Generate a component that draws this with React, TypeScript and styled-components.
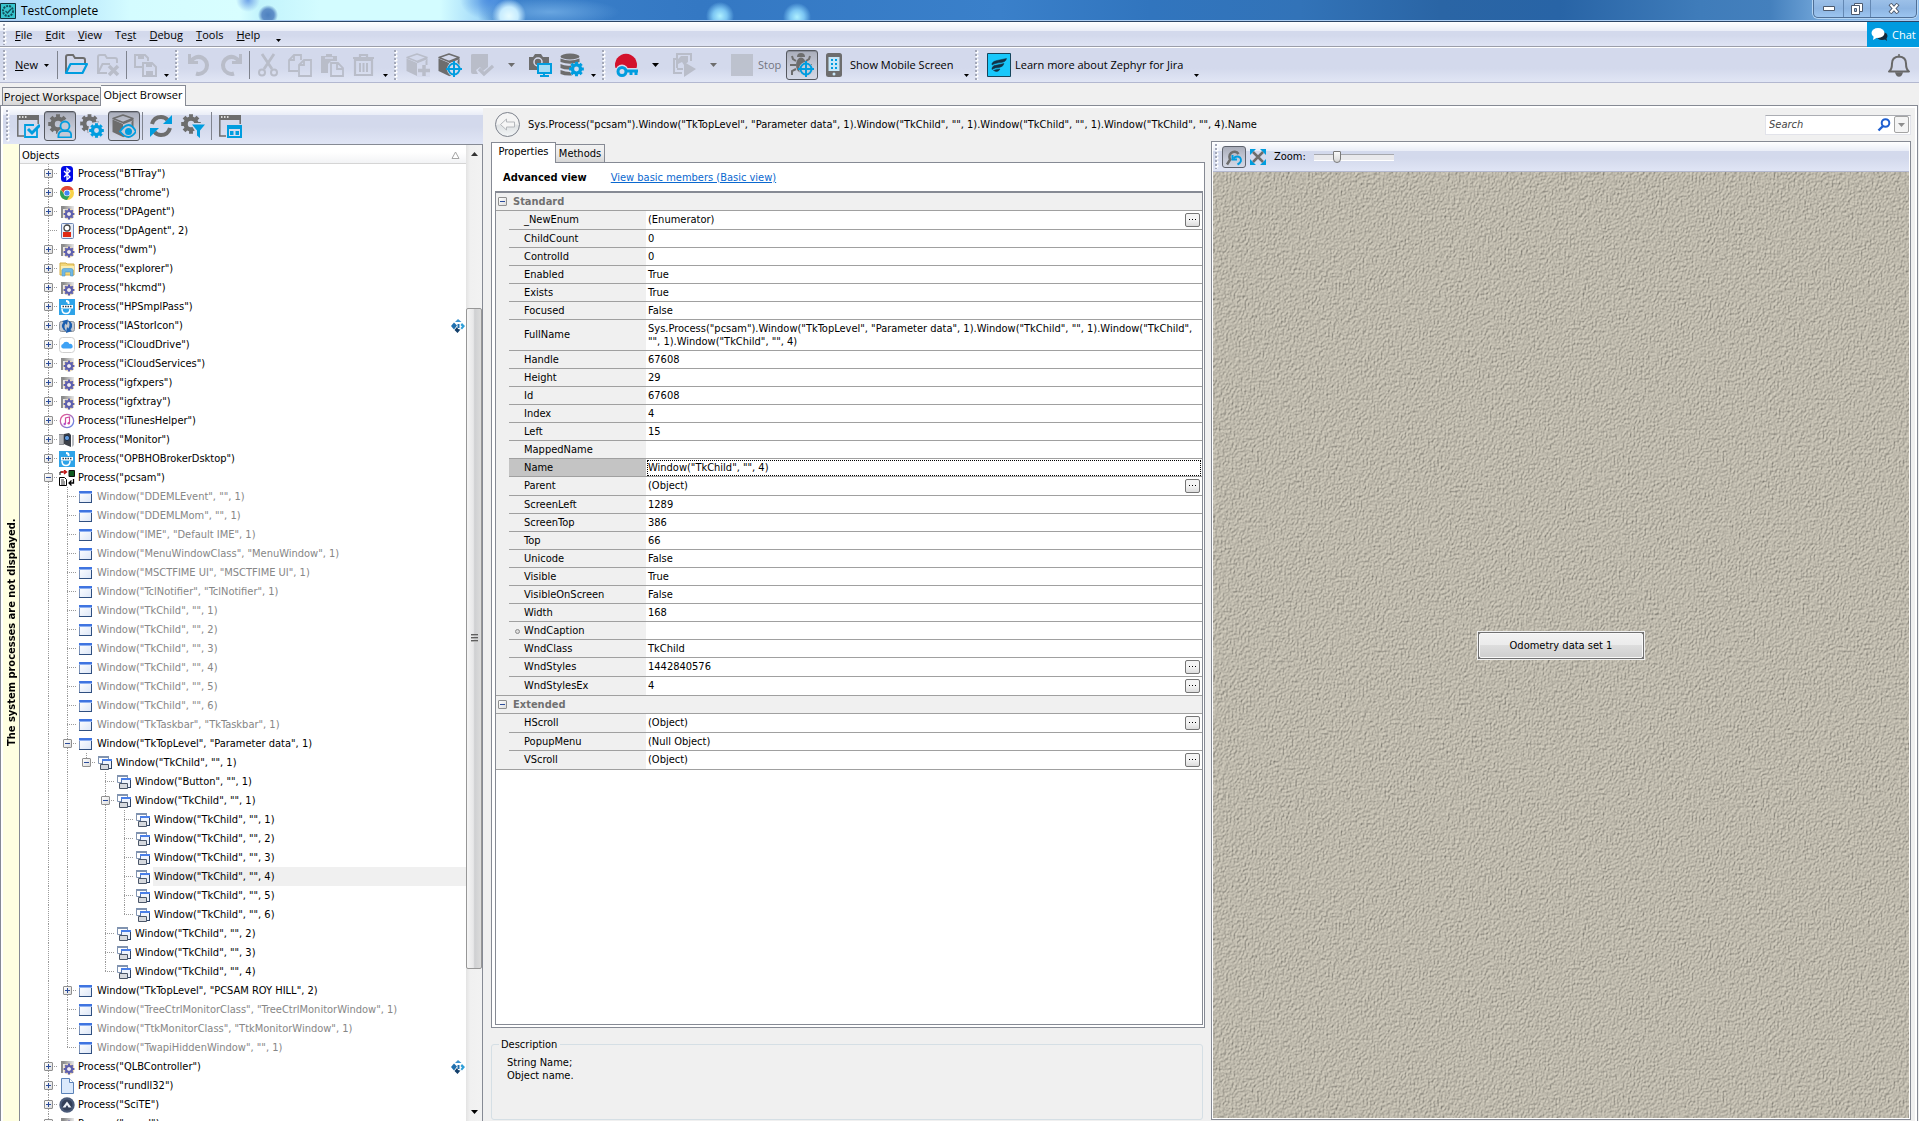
import React from 'react';
import styled, { createGlobalStyle, css } from 'styled-components';

const TAHOMA = `Tahoma, "DejaVu Sans Condensed", "Noto Sans", sans-serif`;
const SEGOE = `"Open Sans", "Noto Sans", sans-serif`;
const GRAY = '#6d6d6d';
const BLUE = '#009ddf';
const OFF = '#b9bdc9';
const LINE = '#868a94';

const GlobalStyle = createGlobalStyle`
  *, *::before, *::after { box-sizing: border-box; }
  html, body, #root { height: 100%; }
  body { margin: 0; overflow: hidden; background: #f0f0f0; color: #000; font: 11px/13px ${TAHOMA}; }
  button, input { font: inherit; color: inherit; }
  button { margin: 0; padding: 0; border: 0; background: none; }
  svg { display: block; flex: none; }
`;

const barGradient = css`background: linear-gradient(#fff 0, #e9edf7 9px, #d3d9ec 9px, #d3d9ec 55%, #e0e5f5 100%);`;

const Shell = styled.div`
  display: flex;
  flex-direction: column;
  height: 100vh;
`;

/* ---------- title bar ---------- */
const TitleBar = styled.header`
  flex: none;
  display: flex;
  align-items: center;
  height: 22px;
  border-bottom: 1px solid #2c4566;
  box-shadow: inset 0 -1px #a9cbf0;
  background:
    radial-gradient(circle at 509px 16px, #e6fbff 0, #c7ecff 9px, transparent 17px),
    radial-gradient(circle at 720px 16px, #aef0ff 0, #7cc6f3 7px, transparent 14px),
    radial-gradient(circle at 797px 17px, #aef0ff 0, #7cc6f3 7px, transparent 14px),
    radial-gradient(ellipse 70px 14px at 550px 12px, #68a5e0 0, transparent 100%),
    radial-gradient(circle at 268px 15px, #4d80bf 0, #5f8fc8 6px, transparent 10px),
    radial-gradient(circle at 248px 0, #6fa3e8 0, transparent 12px),
    radial-gradient(ellipse 30px 20px at 490px 0, #4d8fe0 0, transparent 100%),
    linear-gradient(90deg, #a9d7f7 0, #b5e4fb 60px, #d4fcff 130px, #d8feff 240px, #c2f3fc 260px, #d3fcff 320px, #d3fcff 440px, #a6dcfa 478px, #3b80ca 500px, #3478c3 700px, #3a80ca 1000px, #3175be 1150px, #3273b8 1300px, #2a65a5 1440px, #2864a6 1560px, #3f7cba 1700px, #4480bd 1770px, #82b3e3 1840px, #8fbfee 100%);
`;
const Title = styled.h1`
  flex: 1;
  margin: 0 0 0 5px;
  font: 12px/20px ${SEGOE};
`;
const Caption = styled.div`
  display: flex;
  align-self: flex-start;
  height: 18px;
  margin-right: 2px;
  border: 1px solid #4f6f96;
  border-top: 0;
  border-radius: 0 0 5px 5px;
  background: linear-gradient(#9cc0e8, #8db5e2 50%, #9cc5f0);
  box-shadow: 0 0 0 1px #b5d6f5;
`;
const CaptionButton = styled.button<{ $w: number }>`
  display: grid;
  place-items: center;
  width: ${p => p.$w}px;
  & + & { border-left: 1px solid #6488b3; }
`;

/* ---------- bars ---------- */
const MenuBar = styled.nav`
  flex: none;
  display: flex;
  align-items: stretch;
  height: 26px;
  border-bottom: 1px solid #fff;
  box-shadow: inset 0 -1px #9b9ea9;
  ${barGradient}
  font: 11px/25px ${SEGOE};
`;
const MenuList = styled.div`
  flex: 1;
  display: flex;
  gap: 13px;
  padding-left: 6px;
`;
const MenuItem = styled.button``;
const Chat = styled.button`
  display: flex;
  align-items: center;
  gap: 4px;
  width: 52px;
  height: 25px;
  padding-left: 4px;
  background: #009be0;
  color: #fff;
`;
const ToolBar = styled.div`
  flex: none;
  display: flex;
  align-items: center;
  height: 35px;
  border-bottom: 1px solid #b3b8d0;
  background: linear-gradient(#d3d9ec 0, #d3d9ec 60%, #e1e6f5 100%);
  font: 11px/16px ${SEGOE};
`;
const Grip = styled.i<{ $w?: number }>`
  flex: none;
  align-self: stretch;
  width: ${p => p.$w || 12}px;
  margin: 2px 0;
  background:
    radial-gradient(circle at 1px 1px, #a3a8b8 1px, transparent 1px) center top / 4px 4px repeat-y,
    radial-gradient(circle at 2px 2px, #fff 1px, transparent 2px) center top / 4px 4px repeat-y;
`;
const Tool = styled.button<{ $pressed?: boolean }>`
  flex: none;
  display: grid;
  place-items: center;
  width: 32px;
  height: 30px;
  border-radius: 3px;
  ${p => p.$pressed && css`
    border: 1px solid #55585f;
    box-shadow: inset 0 1px #8b8f9b;
    background: linear-gradient(#a9adba, #c6cad8 60%, #d3d8e6);
  `}
`;
const TextTool = styled.button<{ $w: number; $off?: boolean }>`
  flex: none;
  display: flex;
  align-items: center;
  gap: 6px;
  width: ${p => p.$w}px;
  white-space: nowrap;
  color: ${p => (p.$off ? '#72757f' : '#000')};
`;
const NewLabel = styled.span`padding-left: 6px;`;
const Separator = styled.i`
  flex: none;
  width: 5px;
  height: 28px;
  background: linear-gradient(#7f838e, #7f838e) 2px 0 / 1px 100% no-repeat;
`;
const Arrow = styled.button<{ $w: number; $color?: string }>`
  flex: none;
  display: grid;
  place-items: center;
  width: ${p => p.$w}px;
  color: ${p => p.$color || '#000'};
`;
const More = styled.button`
  flex: none;
  align-self: flex-end;
  display: grid;
  place-items: center;
  width: 10px;
  height: 14px;
`;
const Push = styled.span`flex: 1;`;
const BellButton = styled.button`margin-right: 8px;`;

/* ---------- tabs ---------- */
const TabStrip = styled.div<{ $h: number; $left: number }>`
  flex: none;
  display: flex;
  align-items: flex-end;
  height: ${p => p.$h}px;
  padding-left: ${p => p.$left}px;
`;
const Tab = styled.button<{ $active?: boolean; $w: number; $segoe?: boolean }>`
  position: relative;
  flex: none;
  width: ${p => p.$w}px;
  height: ${p => (p.$active ? 20 : 18)}px;
  border: 1px solid ${LINE};
  border-bottom: 0;
  background: ${p => (p.$active ? '#fff' : 'linear-gradient(#f2f2f2, #ebebeb 50%, #d6d6d6)')};
  white-space: nowrap;
  ${p => p.$segoe && css`font-family: ${SEGOE};`}
  ${p => p.$active && css`z-index: 1; margin-bottom: -1px; height: 21px; padding-bottom: 3px;`}
  & + & { border-left-width: ${p => (p.$active ? 1 : 0)}px; }
`;

/* ---------- main frame ---------- */
const Frame = styled.main`
  flex: 1;
  min-height: 0;
  display: flex;
  margin-right: 1px;
  border: 1px solid ${LINE};
  border-bottom: 0;
  background: #f0f0f0;
  box-shadow: inset 0 2px #fff, inset 2px 0 #fff, inset -2px 0 #fff;
`;
const Left = styled.section`
  flex: none;
  display: flex;
  flex-direction: column;
  width: 482px;
  padding-left: 2px;
`;
const LeftBar = styled.div`
  flex: none;
  display: flex;
  align-items: center;
  height: 38px;
  padding-top: 2px;
  ${barGradient}
`;
const LeftBody = styled.div`
  flex: 1;
  min-height: 0;
  display: flex;
`;
const Notice = styled.aside`
  flex: none;
  display: flex;
  align-items: center;
  justify-content: center;
  width: 16px;
  background: #ffffe1;
  writing-mode: vertical-rl;
  transform: rotate(180deg);
  font-weight: bold;
  white-space: nowrap;
`;
const TreeBox = styled.div`
  flex: 1;
  min-width: 0;
  display: flex;
  border: 1px solid ${LINE};
  border-bottom: 0;
  background: #fff;
`;
const TreeMain = styled.div`
  flex: 1;
  min-width: 0;
  display: flex;
  flex-direction: column;
  overflow: hidden;
`;
const TreeHead = styled.div`
  flex: none;
  display: flex;
  align-items: center;
  justify-content: space-between;
  height: 19px;
  padding: 2px 6px 0 2px;
  border-bottom: 1px solid #d5d5d5;
  background: linear-gradient(#fff 40%, #f2f3f5);
`;
const Tree = styled.ul`
  flex: 1;
  min-height: 0;
  margin: 0;
  padding: 0;
  overflow: hidden;
  list-style: none;
`;
const Node = styled.li`
  display: flex;
  align-items: center;
  height: 19px;
  padding-left: 19px;
  white-space: pre;
`;
const dotsV = 'repeating-linear-gradient(#9a9a9a 0 1px, transparent 1px 2px)';
const dotsH = 'repeating-linear-gradient(90deg, #9a9a9a 0 1px, transparent 1px 2px)';
const Rail = styled.span<{ $v: 'full' | 'half' | 'none'; $h?: boolean }>`
  flex: none;
  display: grid;
  place-items: center;
  width: 19px;
  height: 19px;
  background:
    ${dotsV} 9px 0 / 1px ${p => ({ full: 19, half: 10, none: 0 })[p.$v]}px no-repeat,
    ${dotsH} 9px 9px / ${p => (p.$h ? 10 : 0)}px 1px no-repeat;
`;
const Expander = styled.button`
  display: grid;
  place-items: center;
  width: 9px;
  height: 9px;
  border: 1px solid #8f8f8f;
  border-radius: 1px;
  background: linear-gradient(135deg, #fff, #dcdcdc);
`;
const IconSlot = styled.span`
  flex: none;
  display: grid;
  align-items: center;
  width: 19px;
  padding-left: 1px;
`;
const NodeText = styled.span<{ $dim?: boolean; $selected?: boolean }>`
  flex: 1;
  padding-left: 1px;
  line-height: 19px;
  color: ${p => (p.$dim ? '#868686' : '#000')};
  background: ${p => (p.$selected ? '#f0f0f0' : 'transparent')};
`;
const Mark = styled.span`
  flex: none;
  margin-right: 1px;
`;
const ScrollTrack = styled.div`
  flex: none;
  display: grid;
  grid-template-rows: 18px 145fr 661fr 134fr 18px;
  width: 16px;
  background: linear-gradient(90deg, #e3e3e3, #f0f0f0 4px, #f2f2f2);
`;
const ScrollCell = styled.span`
  display: grid;
  place-items: center;
`;
const Thumb = styled(ScrollCell)`
  border: 1px solid #979797;
  border-radius: 2px;
  background: linear-gradient(90deg, #f5f5f5, #e8e8e9 45%, #cfd0d2 55%, #dcdcdc);
`;
const Ridges = styled.i`
  width: 7px;
  height: 9px;
  background: repeating-linear-gradient(#5f5f5f 0 1px, #b0b0b0 1px 2px, transparent 2px 3px);
`;

/* ---------- right side ---------- */
const Right = styled.section`
  flex: 1;
  min-width: 0;
  display: flex;
  flex-direction: column;
  padding: 2px 6px 1px 8px;
`;
const PathBar = styled.div`
  flex: none;
  display: flex;
  align-items: center;
  gap: 8px;
  height: 33px;
  padding-left: 4px;
`;
const Back = styled.button`
  display: grid;
  place-items: center;
  width: 25px;
  height: 25px;
  border: 1px solid #7d828c;
  border-radius: 50%;
  background: linear-gradient(#f4f4f4 45%, #dfe2e4 55%, #f2f5f6);
`;
const PathText = styled.span`
  flex: 1;
  white-space: nowrap;
`;
const SearchBox = styled.label`
  display: flex;
  align-items: center;
  gap: 3px;
  width: 146px;
  height: 20px;
  padding: 0 1px 0 3px;
  border: 1px solid #e2e3ea;
  border-top-color: #abadb3;
  background: #fff;
`;
const SearchInput = styled.input`
  flex: 1;
  min-width: 0;
  padding: 0;
  border: 0;
  outline: 0;
  background: none;
  &::placeholder { color: #444; font-style: italic; opacity: 1; }
`;
const DropButton = styled.button`
  display: grid;
  place-items: center;
  width: 15px;
  height: 17px;
  border: 1px solid #a3a3a3;
  border-radius: 2px;
  background: #f4f4f4;
  color: #8d8d8d;
`;
const Split = styled.div`
  flex: 1;
  min-height: 0;
  display: flex;
  gap: 6px;
`;
const Inspector = styled.div`
  flex: 718 1 0;
  min-width: 0;
  display: flex;
  flex-direction: column;
`;
const Page = styled.div`
  flex: 1;
  min-height: 0;
  display: flex;
  flex-direction: column;
  padding: 0 1px 2px 3px;
  border: 1px solid ${LINE};
  background: #fff;
`;
const ViewHead = styled.div`
  flex: none;
  display: flex;
  align-items: center;
  gap: 24px;
  height: 28px;
  padding-left: 8px;
`;
const BasicLink = styled.a`color: #0a68cf;`;
const GridBox = styled.div`
  flex: 1;
  min-height: 0;
  overflow: hidden;
  border: 1px solid ${LINE};
  border-top-width: 2px;
`;
const Grid = styled.table`
  width: 100%;
  border-collapse: separate;
  border-spacing: 0;
  table-layout: fixed;
`;
const Gutter = styled.td`
  width: 13px;
  padding: 0;
  background: #f0f0f0;
  tr:last-child > & { border-bottom: 1px solid #a0a0a0; }
`;
const GroupCell = styled.td`
  padding: 0;
  height: 18px;
  border-bottom: 1px solid #a0a0a0;
  background: #f0f0f0;
  color: #707070;
  font-weight: bold;
`;
const GroupHead = styled.div`
  display: flex;
  align-items: center;
  gap: 6px;
  padding-left: 2px;
`;
const NameCell = styled.th<{ $h: number; $selected?: boolean }>`
  width: 137px;
  height: ${p => p.$h}px;
  padding: 0 0 ${p => (p.$h === 18 ? 0 : 1)}px 15px;
  border-bottom: 1px solid #a0a0a0;
  background: ${p => (p.$selected ? '#c4c4c4' : '#f0f0f0')};
  font-weight: normal;
  text-align: left;
`;
const NameInner = styled.span<{ $dot?: boolean }>`
  ${p => p.$dot && css`
    position: relative;
    &::before {
      content: '';
      position: absolute;
      left: -9px;
      top: 5px;
      width: 5px;
      height: 5px;
      border: 1px solid #8a8a8a;
      border-radius: 50%;
      background: #ddd;
    }
  `}
`;
const ValueCell = styled.td<{ $focus?: boolean; $tall?: boolean }>`
  padding: 0 2px ${p => (p.$tall ? 1 : 0)}px 2px;
  border-bottom: 1px solid #a0a0a0;
  background: #fff;
  ${p => p.$focus && css`outline: 1px dotted #000; outline-offset: -2px;`}
`;
const ValueInner = styled.div`
  display: flex;
  align-items: center;
  justify-content: space-between;
`;
const Dots = styled.button`
  flex: none;
  display: grid;
  place-items: center;
  width: 15px;
  height: 14px;
  margin: -1px 0;
  border: 1px solid #757575;
  border-radius: 2px;
  background: linear-gradient(#f4f4f4 50%, #dcdcdc);
`;
const Description = styled.fieldset`
  flex: none;
  height: 82px;
  margin: 10px 2px 0 0;
  padding: 3px 0 0 15px;
  border: 1px solid #d5dfe5;
  border-radius: 3px;
  legend { margin-left: -8px; padding: 0 3px 0 2px; }
  p { margin: 2px 0 0; }
`;
const Preview = styled.div`
  flex: 700 1 0;
  min-width: 0;
  display: flex;
  flex-direction: column;
  padding: 0 1px 1px;
  border: 1px solid ${LINE};
  background: #fff;
`;
const PreviewBar = styled.div`
  flex: none;
  display: flex;
  align-items: center;
  height: 30px;
  border-bottom: 1px solid #b3b8d0;
  ${barGradient}
`;
const SmallTool = styled.button<{ $pressed?: boolean }>`
  flex: none;
  display: grid;
  place-items: center;
  width: 24px;
  height: 22px;
  border-radius: 3px;
  ${p => p.$pressed && css`
    border: 1px solid #5f636d;
    background: linear-gradient(#a9adba, #c6cad8 60%, #d3d8e6);
  `}
`;
const ZoomLabel = styled.label`
  display: flex;
  align-items: center;
  gap: 8px;
  margin-left: 4px;
`;
const Slider = styled.input`
  appearance: none;
  width: 80px;
  height: 12px;
  margin: 0;
  background: linear-gradient(#a5a7ad 0 1px, #e9e9ec 1px 6px, #fff 6px) 0 3px / 100% 7px no-repeat;
  &::-webkit-slider-thumb {
    appearance: none;
    width: 8px;
    height: 12px;
    border: 1px solid #7a7a7a;
    border-radius: 1px 1px 4px 4px;
    background: linear-gradient(#fafafa, #d5d5d5);
  }
`;
const Canvas = styled.div`
  position: relative;
  flex: 1;
  display: grid;
  place-items: center;
  background: #bdb9ab;
  overflow: hidden;
`;
const Grain = styled.svg`
  position: absolute;
  inset: 0;
  width: 100%;
  height: 100%;
`;
const ShotButton = styled.button`
  position: relative;
  width: 168px;
  height: 29px;
  border: 1px solid #f0f0f0;
  background: #707070;
  padding: 1px;
  span {
    display: block;
    height: 25px;
    line-height: 24px;
    border: 1px solid #fafafa;
    border-radius: 2px;
    background: linear-gradient(#f2f2f2, #ebebeb 48%, #dddddd 50%, #cfcfcf);
  }
`;

/* ---------- icons ---------- */
const Ico = ({ s = 24, children }: { s?: number; children: React.ReactNode }) => (
  <svg width={s} height={s} viewBox={`0 0 ${s} ${s}`} fill="none">{children}</svg>
);
function gearPath(cx: number, cy: number, r: number, teeth = 8) {
  const pts: string[] = [];
  const step = (Math.PI * 2) / teeth;
  for (let i = 0; i < teeth; i++) {
    const a = i * step - Math.PI / 2;
    [[-0.32, 0.76], [-0.26, 1], [0.26, 1], [0.32, 0.76]].forEach(([o, k]) => {
      pts.push(`${(cx + Math.cos(a + o * step) * r * k).toFixed(2)} ${(cy + Math.sin(a + o * step) * r * k).toFixed(2)}`);
    });
  }
  const h = r * 0.32;
  return `M${pts.join('L')}ZM${cx - h} ${cy}a${h} ${h} 0 1 0 ${2 * h} 0a${h} ${h} 0 1 0 ${-2 * h} 0Z`;
}
const Gear = ({ x, y, r, c }: { x: number; y: number; r: number; c: string }) => (
  <path d={gearPath(x, y, r)} fill={c} fillRule="evenodd" />
);
const Tri = ({ w = 5 }: { w?: number }) => (
  <svg width={w} height={Math.ceil(w / 2)} viewBox="0 0 6 3" preserveAspectRatio="none"><path d="M0 0h6L3 3z" fill="currentColor" /></svg>
);
const Cube = ({ c }: { c: string }) => (
  <><path d="M1 4.500 11 1l10 3.500-10 4z" fill="none" stroke={c} strokeWidth="1.500" strokeLinejoin="round" /><path d="M.5 5.500v12.500L11 23V10z" fill={c} /><path d="M21.500 5v12l-2 1V8z" fill={c} /><path d="M11 9.500 21 5.500M11 22.500l9-4.500" stroke={c} strokeWidth="1.500" /></>
);
const Target = ({ x, y }: { x: number; y: number }) => (
  <g stroke={BLUE} strokeWidth="2"><circle cx={x} cy={y} r="5.500" /><path d={`M${x - 8} ${y}h16M${x} ${y - 8}v16`} /></g>
);

const icons: Record<string, React.ReactNode> = {
  open: <Ico><path d="M2 20V4q0-2 2-2h5l2 3h8q2 0 2 2v3" stroke={GRAY} strokeWidth="2" /><path d="M2 20 6.500 11H23l-4.500 9z" stroke={BLUE} strokeWidth="2.200" strokeLinejoin="round" /></Ico>,
  close: <Ico><path d="M11 20H2V4q0-2 2-2h5l2 3h8q2 0 2 2v3M2 20 6.500 11H14" stroke={OFF} strokeWidth="2" /><path d="m13 13 9 9m0-9-9 9" stroke={OFF} strokeWidth="3.500" /></Ico>,
  saveAll: <Ico><path d="M9 14H2V2h10l3 3v3" stroke={OFF} strokeWidth="2" /><path d="M5 2v4h6V2" fill={OFF} /><path d="M10 10h9l4 4v9H10z" stroke={OFF} strokeWidth="2" /><path d="M13 10h6v4h-6zM13 18h7v5h-7z" fill={OFF} /></Ico>,
  undo: <Ico><path d="M2.500 1v8.500H11" stroke={OFF} strokeWidth="3" /><path d="M4 8.500A8.500 8.500 0 1 1 9 20.500" stroke={OFF} strokeWidth="4" /></Ico>,
  redo: <Ico><path d="M21.500 1v8.500H13" stroke={OFF} strokeWidth="3" /><path d="M20 8.500A8.500 8.500 0 1 0 15 20.500" stroke={OFF} strokeWidth="4" /></Ico>,
  cut: <Ico><path d="m6 1 10 15M18 1 8 16" stroke={OFF} strokeWidth="2.800" /><circle cx="6" cy="19.500" r="3" stroke={OFF} strokeWidth="2" /><circle cx="18" cy="19.500" r="3" stroke={OFF} strokeWidth="2" /></Ico>,
  copy: <Ico><path d="M10 18H1V7l5-5h7v5M6 2v5H1" stroke={OFF} strokeWidth="1.800" /><path d="m11 12 5-5h7v16H11zM16 7v5h-5" stroke={OFF} strokeWidth="1.800" /></Ico>,
  paste: <Ico><path d="M1 3h5V1h6v2h5v5h-6l-3 3v9H1z" fill={OFF} /><path d="M5 5h8" stroke="#d5daec" strokeWidth="1.500" /><path d="M11 10h7l5 5v8H11zM17 10v6h6" stroke={OFF} strokeWidth="1.800" /></Ico>,
  trash: <Ico><path d="M1 5h21M8 5V2h7v3" stroke={OFF} strokeWidth="2.200" /><path d="M3 7h17v15H3z" stroke={OFF} strokeWidth="2.200" /><path d="M8 10v9m3.500-9v9m3.500-9v9" stroke={OFF} strokeWidth="2" /></Ico>,
  cubeAdd: <Ico><Cube c={OFF} /><path d="M11 12h13v12H11z" fill="#d6dbed" /><path d="M18 12v11m-6-5.500h12" stroke={OFF} strokeWidth="3.500" /></Ico>,
  cubeTarget: <Ico><Cube c={GRAY} /><circle cx="16" cy="16" r="7" fill="#d6dbed" /><Target x={16} y={16} /></Ico>,
  check: <Ico><path d="M1 2q0-1 2-1h15v13l-5 4-3-4-4 3 2 4H3q-2 0-2-2z" fill={OFF} /><path d="m9 16 5 5L23 13" stroke={OFF} strokeWidth="3.200" /></Ico>,
  camera: <Ico><path d="M1 4h4l2-3h6l2 3h6v6H10v7H1z" fill={GRAY} /><circle cx="10" cy="9" r="4" stroke="#d6dbed" strokeWidth="1.500" /><path d="M10 11h13v9H10z" fill="#a4dcf5" stroke={BLUE} strokeWidth="2" /><path d="M16 20v3m-4 0h9" stroke={BLUE} strokeWidth="2" /></Ico>,
  database: <Ico><ellipse cx="10" cy="3.500" rx="9.500" ry="3" fill={GRAY} /><path d="M.5 5.500q9.500 4 19 0V9Q10 12.500.5 9zM.5 11q5 2.500 11 1.500l-1 4Q5 17 .5 15zM.5 17q5 2 9.500 2l2 3.500Q5 23 .5 21z" fill={GRAY} /><Gear x={16.5} y={16} r={7.5} c={BLUE} /></Ico>,
  record: <Ico><path d="M1.500 15a11 11 0 1 1 21 0z" fill="#d3122c" /><circle cx="8" cy="18" r="6.500" fill="#d6dbed" /><circle cx="8" cy="18.500" r="4" stroke={BLUE} strokeWidth="3" /><path d="M12 18h12M17 18v4m5-4v4" stroke={BLUE} strokeWidth="3" /></Ico>,
  run: <Ico><path d="M10 20H2V6h3M5 15V1h14v7M5 16h6" stroke={OFF} strokeWidth="2" /><path d="m9 3-3 3v5l4-2 2 3 4-3V3z" fill={OFF} /><path d="m12 9 12 7-12 8z" fill={OFF} /></Ico>,
  stop: <Ico><path d="M1 1h22v22H1z" fill={OFF} opacity=".85" /></Ico>,
  bug: <Ico><ellipse cx="11" cy="12" rx="5" ry="7.500" fill={GRAY} /><path d="M7 4a4 4 0 0 1 8 0z" fill={GRAY} /><path d="M6 8 3 6 2 3m4 9H0m6 4-4 2v4M16 8l3-2 1-3m-4 9h6" stroke={GRAY} strokeWidth="2" /><circle cx="16" cy="16" r="7" fill="#c5c9d6" /><Target x={16} y={16} /></Ico>,
  phone: <Ico><rect x="4" width="16" height="24" rx="2.500" fill={GRAY} /><path d="M6.500 4h11v14h-11z" fill="#c7e6f7" /><path d="M9 6h2v2H9zm4 0h2v2h-2zM9 10h2v2H9zm4 0h2v2h-2zM9 14h2v2H9zm4 0h2v2h-2z" fill={BLUE} /><circle cx="12" cy="21" r="1.500" fill="#c7e6f7" /></Ico>,
  zephyr: <Ico><path d="M.5.500h23v23H.5z" fill="#19c8fb" stroke="#16455c" /><path d="M5 10.500Q6 8 10 7.500l9.500-2Q19 9 14 9.500 8 10 5 12zM5 15q1-3 5-3l7-1.500q-1 3.500-5 4-4 0-7 2zM6.500 17.500q3-1.500 6.500-1.500-1.500 3-4 2.500z" fill="#123247" stroke="#123247" strokeWidth=".5" /></Ico>,
  winCheck: <Ico><path d="M1 1h22v5H1z" fill={GRAY} /><path d="M3 3h1.500m1.500 0h1.500M9 3h1.500" stroke="#fff" strokeWidth="1.500" /><path d="M1.800 6v16H8M22.200 6v4" stroke={GRAY} strokeWidth="1.500" /><path d="M21 15v8H9V11h9" stroke={BLUE} strokeWidth="1.800" /><path d="m12 15 4 4 8-8" stroke={BLUE} strokeWidth="3" /></Ico>,
  gearUser: <Ico><Gear x={10} y={10} r={10} c={GRAY} /><path d="M9 24q-1-8 5-9-4-7 3-9 7 2 3 9 5 0 4 9z" fill="#bcc0cd" /><circle cx="17" cy="12" r="4.500" fill="#c5c9d6" stroke={BLUE} strokeWidth="1.800" /><path d="M10.500 23.500q-.5-6.500 4.500-6.500h4q5 0 4 6.500z" fill="#c5c9d6" stroke={BLUE} strokeWidth="1.800" /></Ico>,
  gearGear: <Ico><Gear x={9.500} y={9.500} r={9.500} c={GRAY} /><circle cx="16.500" cy="16.500" r="8.500" fill="#d6dbed" /><Gear x={16.500} y={16.500} r={7.500} c={BLUE} /></Ico>,
  cubeEye: <Ico><Cube c={GRAY} /><path d="M8 17.500q9-13 16 0-7 11-16 0z" fill="#c5c9d6" stroke={BLUE} strokeWidth="1.800" /><circle cx="16.500" cy="17.500" r="3.500" fill={BLUE} /></Ico>,
  refresh: <Ico><path d="M3 10q2-7 9-7 4 0 6.500 3" stroke={GRAY} strokeWidth="4" /><path d="M23 1v9h-9z" fill={BLUE} /><path d="M21 14q-2 7-9 7-4 0-6.500-3" stroke={GRAY} strokeWidth="4" /><path d="M1 23v-9h9z" fill={BLUE} /></Ico>,
  gearFilter: <Ico><Gear x={10} y={10} r={10} c={GRAY} /><path d="M9 9h16l-6 8v8l-5-3v-5z" fill="#d6dbed" /><path d="M11 10.500h13l-5 6v7.500l-3-2.500v-5z" fill={BLUE} /></Ico>,
  winTable: <Ico><path d="M1 1h22v5H1z" fill={GRAY} /><path d="M3 3h1.500m1.500 0h1.500M9 3h1.500" stroke="#fff" strokeWidth="1.500" /><path d="M1.800 6v16H8M22.200 6v4" stroke={GRAY} strokeWidth="1.500" /><path d="M10 12h13v11H10z" stroke={BLUE} strokeWidth="2" /><path d="M10 11h13v4H10zM12 17h3.500v4H12zm5.500 0H21v4h-3.500z" fill={BLUE} /></Ico>,
  bell: <Ico><path d="M2 18.500q3-2 3-8 0-6.500 7-7 7 .5 7 7 0 6 3 8z" stroke="#686868" strokeWidth="2" strokeLinejoin="round" /><path d="M12 1v3M9 20h6q-1 3-3 3t-3-3z" stroke="#686868" strokeWidth="1.500" fill="#686868" /></Ico>,
};

/* small tree pictures */
const winIcon = (
  <Ico s={16}><defs><linearGradient id="wf" x1="0" y1="0" x2="1" y2="1"><stop stopColor="#fff" /><stop offset="1" stopColor="#dce6f7" /></linearGradient></defs><path d="M1.500 2.500h12v11h-12z" fill="url(#wf)" stroke="#7d93b8" /><path d="M1 2h13v2H1z" fill="#3f74e0" /><path d="M1 4h13v1H1z" fill="#8fb1f2" /><path d="M1 13.500h13M13.500 5v9" stroke="#2f4f80" /></Ico>
);
const childIcon = (
  <Ico s={16}><path d="M1.500 1.500h10v7h-10z" fill="#fff" stroke="#8093b0" /><path d="M1 2h11" stroke="#8093b0" strokeWidth="2" /><path d="M5.500 4.500h9v9h-9z" fill="#eef3fc" stroke="#5a75a5" /><path d="M5 4h10v2H5z" fill="#4a7fe8" /><path d="M14.500 6v8M11 13.500h4" stroke="#2f4466" /><path d="M3.500 9.500h8v5h-8z" fill="#d6d9de" stroke="#4b5668" /></Ico>
);
const gearIcon = (
  <Ico s={16}><defs><linearGradient id="gw"><stop stopColor="#777" /><stop offset="1" stopColor="#e8e8e8" /></linearGradient></defs><path d="M2 2h13v12H2z" fill="#e8e8e8" /><path d="M2 2h13v3H2z" fill="url(#gw)" /><path d="M2 2h2v12H2z" fill="#8b8b8b" /><circle cx="10" cy="10" r="5.500" fill="#f8e3b4" /><Gear x={10} y={10} r={5.500} c="#5d5fae" /><circle cx="10" cy="10" r="1.800" fill="#f0ecf8" /></Ico>
);
const passIcon = (
  <Ico s={16}><path d="M0 0h16v16H0z" fill="#2ea3e8" /><path d="M3 10q0 4.500 4 4.500t4-4.500" stroke="#fff" strokeWidth="1.500" /><path d="M7 2q3 0 2.500 3" stroke="#fff" strokeWidth="2" /><path d="M2 6h12v3.500H2z" fill="#fff" /><path d="M3.500 7.500H13" stroke="#2b3d50" strokeWidth="1.500" strokeDasharray="1.500 1" /></Ico>
);
const treeIcons: Record<string, React.ReactNode> = {
  win: winIcon,
  child: childIcon,
  gear: gearIcon,
  pass: passIcon,
  bt: <Ico s={16}><rect x="2" width="12" height="16" rx="3.500" fill="#0009e6" /><path d="m5 5 6 6-3 2.500v-11L11 5l-6 6" stroke="#fff" strokeWidth="1.300" /></Ico>,
  chrome: <Ico s={16}><circle cx="8" cy="8" r="7" fill="#f9d349" /><path d="M2 4.500A7 7 0 0 1 14.500 5H8q-2.500 0-3 3z" fill="#e0483a" /><path d="M1.800 4.800A7 7 0 0 0 8 15l3-5q-3 2.500-6-1z" fill="#2ea05a" /><circle cx="8" cy="8" r="3.300" fill="#fff" /><circle cx="8" cy="8" r="2.600" fill="#4285f4" /></Ico>,
  agent: <Ico s={16}><rect x="2.500" y=".5" width="12" height="15" rx="1" fill="#e8eef8" stroke="#6f87b5" /><circle cx="8" cy="5" r="3" fill="#fff" stroke="#444" strokeWidth="1.300" /><path d="M4 9h8v5H4z" fill="#e02a14" /></Ico>,
  folder: <Ico s={16}><path d="M1 2h6l1 1h7v11H1z" fill="#f3d77a" stroke="#d2ad49" /><path d="M2 5h13v4H2z" fill="#fbeeb4" /><path d="M3 15V9q0-1.500 2-1.500h7q2 0 2 1.500v6h-2.500v-4H6v4z" fill="#6fb8e6" stroke="#4e99cc" strokeWidth=".6" /></Ico>,
  storage: <Ico s={16}><rect x=".5" y="3.500" width="15" height="10" rx="2" fill="#c3c8d0" stroke="#8d939c" /><path d="M7.500 13.500Q0 10 4.500 4L3 3l6-1.500L8 7 6.500 5.500Q4 9 7.500 13.500z" fill="#1c5fb0" /><path d="M8.500 2Q16 5 11.500 12l1.500 1-6 2 1-6 1.500 1.500Q12 6 8.500 2z" fill="#1c5fb0" /></Ico>,
  cloud: <Ico s={16}><rect x=".5" y=".5" width="15" height="15" rx="3" fill="#fff" stroke="#d0d0d0" /><path d="M4 11.500a2.300 2.300 0 0 1 0-4.500 3.500 3.500 0 0 1 6.500 0 2.300 2.300 0 0 1 1.500 4.500z" fill="#3fa2f5" /></Ico>,
  itunes: <Ico s={16}><defs><linearGradient id="it" x1="0" y1="0" x2="1" y2="1"><stop stopColor="#f0508c" /><stop offset="1" stopColor="#5a8cf0" /></linearGradient></defs><circle cx="8" cy="8" r="6.700" fill="#fff" stroke="url(#it)" strokeWidth="1.300" /><path d="M6.500 11V5l4-1v6" stroke="#d049a0" strokeWidth="1.200" /><circle cx="5.700" cy="11" r="1.200" fill="#b050d0" /><circle cx="9.700" cy="10.200" r="1.200" fill="#d049a0" /></Ico>,
  monitor: <Ico s={16}><path d="M0 2h5v11H0z" fill="#8d8f94" /><path d="M1 3v9M3 3v9" stroke="#d5d7da" /><path d="m5 2 5-1 2 2v12l-5-2-2-1z" fill="#3c4048" /><circle cx="8" cy="6" r="2.600" fill="#5f9be0" stroke="#1d2a40" /><path d="M13 3h2v10l-2 2z" fill="#b9bcc2" /></Ico>,
  pcsam: <Ico s={16}><path d="M1 5V2h3" stroke="#000" /><path d="M2 2h5M5 0l2.500 2L5 4" stroke="#c01010" strokeWidth="1.300" /><path d="M10 .5h5.500v6H10z" fill="#0f5a1e" stroke="#111" /><path d="M.5 7.500h5l2 2v6h-7z" fill="#fff" stroke="#000" /><path d="M2 10h3m-3 2h4m-4 2h4" stroke="#000" strokeWidth=".8" /><path d="M14.500 9v4H10m2.500-2.500L10 13l2.500 2.500" stroke="#000" strokeWidth="1.300" /></Ico>,
  file: <Ico s={16}><path d="M2.500.5h8l4 4v11h-12z" fill="#dbe9fb" stroke="#5b82b8" /><path d="M10.500.5v4h4" fill="#fff" stroke="#5b82b8" /></Ico>,
  scite: <Ico s={16}><circle cx="8" cy="8" r="7.700" fill="#4a5a78" /><circle cx="8" cy="8" r="5.500" fill="#333f58" /><path d="m3.500 10.500 4.500-6 4.500 6h-3L8 8l-1.500 2.500z" fill="#eef2f8" /></Ico>,
};
const TestedMark = () => (
  <Ico s={14}><path d="m3 3.500 3 3-3 4L0 7z" fill="#1f6fae" /><path d="M7 0l3.500 3H4z" fill="#3c93cf" /><path d="M11 4l3 3-3 3.500L9.500 9 11 7.500 9.500 6z" fill="#2f9fd8" /><path d="m6.500 14-3-3L6 8q1 3 3.500 2.500z" fill="#123f6b" /><path d="M6.500 5h2v4h-2z" fill="#1f6fae" /></Ico>
);

/* ---------- data ---------- */
type Row = { t: string; i: string; d: number; e?: '+' | '-'; dim?: boolean; last?: boolean; rails?: boolean[]; sel?: boolean; mark?: boolean };
const P = (n: string, i = 'gear', e: '+' | '-' | undefined = '+', extra: Partial<Row> = {}): Row => ({ t: `Process("${n}")`, i, d: 0, e, ...extra });
const W = (t: string, extra: Partial<Row> = {}): Row => ({ t: `Window(${t})`, i: 'win', d: 1, dim: true, rails: [true], ...extra });
const C = (n: number, d: number, extra: Partial<Row> = {}): Row => ({ t: `Window("TkChild", "", ${n})`, i: 'child', d, rails: [true, true, false, true].slice(0, d), ...extra });
const rows: Row[] = [
  P('BTTray', 'bt'), P('chrome', 'chrome'), P('DPAgent'),
  { t: 'Process("DpAgent", 2)', i: 'agent', d: 0 },
  P('dwm'), P('explorer', 'folder'), P('hkcmd'), P('HPSmplPass', 'pass'), P('IAStorIcon', 'storage', '+', { mark: true }),
  P('iCloudDrive', 'cloud'), P('iCloudServices'), P('igfxpers'), P('igfxtray'), P('iTunesHelper', 'itunes'),
  P('Monitor', 'monitor'), P('OPBHOBrokerDsktop', 'pass'), P('pcsam', 'pcsam', '-'),
  W('"DDEMLEvent", "", 1'), W('"DDEMLMom", "", 1'), W('"IME", "Default IME", 1'), W('"MenuWindowClass", "MenuWindow", 1'),
  W('"MSCTFIME UI", "MSCTFIME UI", 1'), W('"TclNotifier", "TclNotifier", 1'),
  ...[1, 2, 3, 4, 5, 6].map(n => W(`"TkChild", "", ${n}`)),
  W('"TkTaskbar", "TkTaskbar", 1'),
  W('"TkTopLevel", "Parameter data", 1', { dim: false, e: '-' }),
  C(1, 2, { e: '-', last: true }),
  { t: 'Window("Button", "", 1)', i: 'child', d: 3, rails: [true, true, false] },
  C(1, 3, { e: '-' }),
  ...[1, 2, 3, 4, 5, 6].map(n => C(n, 4, { sel: n === 4, last: n === 6 })),
  C(2, 3), C(3, 3), C(4, 3, { last: true }),
  W('"TkTopLevel", "PCSAM ROY HILL", 2', { dim: false, e: '+' }),
  W('"TreeCtrlMonitorClass", "TreeCtrlMonitorWindow", 1'), W('"TtkMonitorClass", "TtkMonitorWindow", 1'),
  W('"TwapiHiddenWindow", "", 1', { last: true }),
  P('QLBController', 'gear', '+', { mark: true }), P('rundll32', 'file'), P('SciTE', 'scite'), P('scssd'),
];

type Prop = [name: string, value: string, button?: boolean];
const standard: Prop[] = [
  ['_NewEnum', '(Enumerator)', true], ['ChildCount', '0'], ['ControlId', '0'], ['Enabled', 'True'], ['Exists', 'True'], ['Focused', 'False'],
  ['FullName', 'Sys.Process("pcsam").Window("TkTopLevel", "Parameter data", 1).Window("TkChild", "", 1).Window("TkChild", "", 1).Window("TkChild", "", 4)'],
  ['Handle', '67608'], ['Height', '29'], ['Id', '67608'], ['Index', '4'], ['Left', '15'], ['MappedName', ''],
  ['Name', 'Window("TkChild", "", 4)'], ['Parent', '(Object)', true], ['ScreenLeft', '1289'], ['ScreenTop', '386'], ['Top', '66'],
  ['Unicode', 'False'], ['Visible', 'True'], ['VisibleOnScreen', 'False'], ['Width', '168'], ['WndCaption', ''], ['WndClass', 'TkChild'],
  ['WndStyles', '1442840576', true], ['WndStylesEx', '4', true],
];
const extended: Prop[] = [['HScroll', '(Object)', true], ['PopupMenu', '(Null Object)'], ['VScroll', '(Object)', true]];

const Sign = ({ plus }: { plus?: boolean }) => (
  <svg width="7" height="7" viewBox="0 0 7 7"><path d={plus ? 'M1 3h5v1H1zM3 1h1v5H3z' : 'M1 3h5v1H1z'} fill="#2b4c9b" /></svg>
);

const TreeNode = ({ r }: { r: Row }) => (
  <Node role="treeitem" aria-level={r.d + 1} aria-selected={!!r.sel}>
    {(r.rails || []).map((on, k) => <Rail key={k} $v={on ? 'full' : 'none'} />)}
    <Rail $v={r.last ? 'half' : 'full'} $h>
      {r.e && <Expander aria-label={r.e === '+' ? 'Expand' : 'Collapse'}><Sign plus={r.e === '+'} /></Expander>}
    </Rail>
    <IconSlot>{treeIcons[r.i]}</IconSlot>
    <NodeText $dim={r.dim} $selected={r.sel}>{r.t}</NodeText>
    {r.mark && <Mark><TestedMark /></Mark>}
  </Node>
);

const PropGroup = ({ title, items }: { title: string; items: Prop[] }) => (
  <tbody>
    <tr><GroupCell colSpan={3}><GroupHead><Expander aria-label={`Collapse ${title}`}><Sign /></Expander>{title}</GroupHead></GroupCell></tr>
    {items.map(([name, value, button]) => (
      <tr key={name}>
        <Gutter />
        <NameCell scope="row" $h={button ? 19 : name === 'FullName' ? 31 : 18} $selected={name === 'Name'}>
          <NameInner $dot={name === 'WndCaption'}>{name}</NameInner>
        </NameCell>
        <ValueCell $focus={name === 'Name'} $tall={button || name === 'FullName'}>
          <ValueInner>{value}{button && <Dots aria-label={`Open ${name}`}><svg width="7" height="2" viewBox="0 0 7 2"><path d="M0 0h1v1H0zM3 0h1v1H3zM6 0h1v1H6z" fill="#000" /></svg></Dots>}</ValueInner>
        </ValueCell>
      </tr>
    ))}
  </tbody>
);

const T = ({ n, pressed, label }: { n: string; pressed?: boolean; label: string }) => (
  <Tool $pressed={pressed} aria-label={label} aria-pressed={pressed}>{icons[n]}</Tool>
);
const MoreArrow = () => <More aria-label="More"><Tri /></More>;

const menus: [string, string, string][] = [['', 'F', 'ile'], ['', 'E', 'dit'], ['', 'V', 'iew'], ['Te', 's', 't'], ['', 'D', 'ebug'], ['', 'T', 'ools'], ['', 'H', 'elp']];

export default function App() {
  return (
    <Shell>
      <GlobalStyle />
      <TitleBar>
        <Ico s={16}><path d="M.5.500h15v15H.5z" fill="#36c6cf" stroke="#10333d" /><circle cx="8" cy="8" r="5" stroke="#12505c" strokeWidth="2" strokeDasharray="2 1" /><path d="m5.500 8 2 2 3.500-4" stroke="#12505c" strokeWidth="1.300" /></Ico>
        <Title>TestComplete</Title>
        <Caption>
          <CaptionButton $w={29} aria-label="Minimize"><svg width="12" height="6" viewBox="0 0 12 6"><path d="M.5.500h11v4H.5z" fill="#fff" stroke="#4d5a6e" /></svg></CaptionButton>
          <CaptionButton $w={27} aria-label="Restore"><svg width="12" height="12" viewBox="0 0 12 12"><path d="M3.500.500h8v8h-8z" fill="#fff" stroke="#4d5a6e" /><path d="M.5 2.500h8v9h-8z" fill="#fff" stroke="#4d5a6e" /><path d="M3.500 5.500h2v3h-2z" fill="#9cc0e8" stroke="#4d5a6e" /></svg></CaptionButton>
          <CaptionButton $w={46} aria-label="Close"><svg width="12" height="11" viewBox="0 0 12 11"><path d="m2 1 8 9m0-9-8 9" stroke="#4d5a6e" strokeWidth="4" /><path d="m2.500 1.500 7 8m0-8-7 8" stroke="#fff" strokeWidth="2" /></svg></CaptionButton>
        </Caption>
      </TitleBar>

      <MenuBar>
        <Grip $w={9} />
        <MenuList>
          {menus.map(([a, u, b]) => <MenuItem key={u + b}>{a}<u>{u}</u>{b}</MenuItem>)}
          <MoreArrow />
        </MenuList>
        <Chat>
          <svg width="17" height="15" viewBox="0 0 17 15"><ellipse cx="11" cy="9" rx="5.500" ry="4" fill="#15293a" /><path d="m12 11 4 3-1-5z" fill="#15293a" /><ellipse cx="7" cy="6" rx="6.500" ry="5" fill="#fff" /><path d="m3 8-1 5 5-3z" fill="#fff" /></svg>
          Chat
        </Chat>
      </MenuBar>

      <ToolBar>
        <Grip $w={9} />
        <TextTool $w={46}><NewLabel><u>N</u>ew</NewLabel><Tri /></TextTool>
        <Separator />
        <T n="open" label="Open" /><T n="close" label="Close" />
        <Separator />
        <T n="saveAll" label="Save all" />
        <MoreArrow /><Grip />
        <T n="undo" label="Undo" /><T n="redo" label="Redo" />
        <Separator />
        <T n="cut" label="Cut" /><T n="copy" label="Copy" /><T n="paste" label="Paste" /><T n="trash" label="Delete" />
        <MoreArrow /><Grip />
        <T n="cubeAdd" label="Add object" /><T n="cubeTarget" label="Map object" /><T n="check" label="Checkpoint" />
        <Arrow $w={26} $color="#6d6d6d" aria-label="Checkpoint options"><Tri w={7} /></Arrow>
        <T n="camera" label="Screenshot" /><T n="database" label="Data" />
        <MoreArrow /><Grip />
        <T n="record" label="Record" /><Arrow $w={26} aria-label="Record options"><Tri w={7} /></Arrow>
        <T n="run" label="Run" /><Arrow $w={26} $color="#6d6d6d" aria-label="Run options"><Tri w={7} /></Arrow>
        <T n="stop" label="Stop run" /><TextTool $w={28} $off>Stop</TextTool>
        <T n="bug" label="Debugging" pressed />
        <T n="phone" label="Mobile" /><TextTool $w={111}>Show Mobile Screen</TextTool>
        <MoreArrow /><Grip />
        <T n="zephyr" label="Zephyr" /><TextTool $w={176}>Learn more about Zephyr for Jira</TextTool>
        <MoreArrow />
        <Push />
        <BellButton aria-label="Notifications">{icons.bell}</BellButton>
      </ToolBar>

      <TabStrip $h={22} $left={2}>
        <Tab $w={99} $segoe>Project Workspace</Tab>
        <Tab $w={85} $active $segoe>Object Browser</Tab>
      </TabStrip>

      <Frame>
        <Left>
          <LeftBar>
            <Grip $w={9} />
            <T n="winCheck" label="Select" /><T n="gearUser" label="User processes" pressed />
            <T n="gearGear" label="System processes" /><T n="cubeEye" label="Invisible objects" pressed />
            <Separator />
            <T n="refresh" label="Refresh" /><T n="gearFilter" label="Filter" />
            <Separator />
            <T n="winTable" label="Columns" />
          </LeftBar>
          <LeftBody>
            <Notice>The system processes are not displayed.</Notice>
            <TreeBox>
              <TreeMain>
                <TreeHead>Objects<svg width="9" height="8" viewBox="0 0 9 8"><path d="M4.500 1 8 7.500H1z" fill="#fff" stroke="#a5a5a5" /></svg></TreeHead>
                <Tree role="tree">{rows.map((r, k) => <TreeNode key={k} r={r} />)}</Tree>
              </TreeMain>
              <ScrollTrack>
                <ScrollCell><svg width="7" height="4" viewBox="0 0 7 4"><path d="M0 4h7L3.500 0z" fill="#333" /></svg></ScrollCell>
                <span />
                <Thumb><Ridges /></Thumb>
                <span />
                <ScrollCell><Tri w={7} /></ScrollCell>
              </ScrollTrack>
            </TreeBox>
          </LeftBody>
        </Left>

        <Right>
          <PathBar>
            <Back aria-label="Back"><svg width="17" height="13" viewBox="0 0 17 13"><path d="M7.500 1 1.500 6.500l6 5.500V9h8V4h-8z" fill="#f6f6f6" stroke="#b4b7bb" strokeLinejoin="round" /></svg></Back>
            <PathText>{'Sys.Process("pcsam").Window("TkTopLevel", "Parameter data", 1).Window("TkChild", "", 1).Window("TkChild", "", 1).Window("TkChild", "", 4).Name'}</PathText>
            <SearchBox>
              <SearchInput type="text" placeholder="Search" aria-label="Search" />
              <svg width="14" height="14" viewBox="0 0 14 14" fill="none"><circle cx="8.500" cy="5" r="3.800" stroke="#1f5fd0" strokeWidth="2" /><path d="M6 8 1.500 12.500" stroke="#1f5fd0" strokeWidth="2.400" /></svg>
              <DropButton aria-label="Search options"><Tri w={7} /></DropButton>
            </SearchBox>
          </PathBar>
          <Split>
            <Inspector>
              <TabStrip $h={21} $left={0}>
                <Tab $w={65} $active>Properties</Tab>
                <Tab $w={49}>Methods</Tab>
              </TabStrip>
              <Page>
                <ViewHead><b>Advanced view</b><BasicLink href="#basic">View basic members (Basic view)</BasicLink></ViewHead>
                <GridBox>
                  <Grid>
                    <colgroup><col width="13" /><col width="137" /><col /></colgroup>
                    <PropGroup title="Standard" items={standard} />
                    <PropGroup title="Extended" items={extended} />
                  </Grid>
                </GridBox>
              </Page>
              <Description>
                <legend>Description</legend>
                <p>String Name;<br />Object name.</p>
              </Description>
            </Inspector>
            <Preview>
              <PreviewBar>
                <Grip $w={9} />
                <SmallTool $pressed aria-label="Auto zoom" aria-pressed><Ico s={18}><path d="M6 12.500A5 5 0 1 1 13.500 6M5.500 11 2 16.500" stroke={GRAY} strokeWidth="2.500" /><path d="M7.500 7v4.500H12" stroke={BLUE} strokeWidth="2" /><path d="M8.500 10.500q3-3.500 6.500-1 3 4-2.500 7" stroke={BLUE} strokeWidth="2" /></Ico></SmallTool>
                <SmallTool aria-label="Fit"><Ico s={16}><path d="M0 0h6L0 6zM16 0v6l-6-6zM0 16v-6l6 6zM16 16h-6l6-6z" fill={BLUE} /><path d="m3 3 10 10M13 3 3 13" stroke={GRAY} strokeWidth="2.500" /></Ico></SmallTool>
                <ZoomLabel>Zoom:<Slider type="range" min={0} max={100} defaultValue={26} /></ZoomLabel>
              </PreviewBar>
              <Canvas>
                <Grain>
                  <defs>
                    <filter id="grain" x="0" y="0" width="100%" height="100%" colorInterpolationFilters="sRGB">
                      <feTurbulence type="fractalNoise" baseFrequency="0.55 0.4" numOctaves="3" seed="4" />
                      <feDiffuseLighting surfaceScale="1" diffuseConstant="1.060" lightingColor="#cbc6b8">
                        <feDistantLight azimuth="225" elevation="62" />
                      </feDiffuseLighting>
                    </filter>
                  </defs>
                  <rect width="100%" height="100%" filter="url(#grain)" />
                </Grain>
                <ShotButton><span>Odometry data set 1</span></ShotButton>
              </Canvas>
            </Preview>
          </Split>
        </Right>
      </Frame>
    </Shell>
  );
}
